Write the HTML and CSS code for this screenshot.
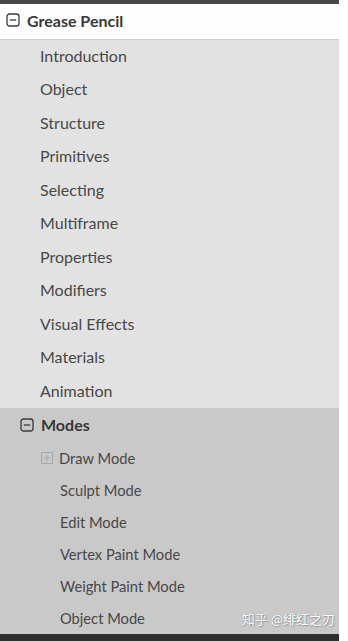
FILE: index.html
```html
<!doctype html>
<html lang="zh">
  <head>
    <meta charset="UTF-8" />
    <meta name="viewport" content="width=device-width, initial-scale=1.0" />
    <title>Grease Pencil</title>
    <link rel="stylesheet" href="styles.css">
  </head>
  <body>
    <div class="panel">
      <div class="top-bar"></div>
      <div class="header">
        <svg class="toggle" viewBox="0 0 14 14" width="14" height="14">
          <rect x="1" y="1" width="12" height="12" rx="2.5" fill="none" stroke="#3a3a3a" stroke-width="1.3"/>
          <line x1="3.8" y1="7" x2="10.2" y2="7" stroke="#3a3a3a" stroke-width="1.3"/>
        </svg>
        <span>Grease Pencil</span>
      </div>
      <ul class="list">
        <li>Introduction</li>
        <li>Object</li>
        <li>Structure</li>
        <li>Primitives</li>
        <li>Selecting</li>
        <li>Multiframe</li>
        <li>Properties</li>
        <li>Modifiers</li>
        <li>Visual Effects</li>
        <li>Materials</li>
        <li>Animation</li>
      </ul>
      <div class="modes">
        <div class="modes-title">
          <svg class="toggle" viewBox="0 0 14 14" width="14" height="14">
            <rect x="1" y="1" width="12" height="12" rx="2.5" fill="none" stroke="#3a3a3a" stroke-width="1.3"/>
            <line x1="3.8" y1="7" x2="10.2" y2="7" stroke="#3a3a3a" stroke-width="1.3"/>
          </svg>
          <span>Modes</span>
        </div>
        <ul class="sub-list">
          <li class="has-children">
            <svg class="expand" viewBox="0 0 12 12" width="12" height="12">
              <rect x="0.5" y="0.5" width="11" height="11" fill="none" stroke="#a9a9a9" stroke-width="1"/>
              <line x1="3" y1="6" x2="9" y2="6" stroke="#a9a9a9" stroke-width="1"/>
              <line x1="6" y1="3" x2="6" y2="9" stroke="#a9a9a9" stroke-width="1"/>
            </svg>
            Draw Mode
          </li>
          <li>Sculpt Mode</li>
          <li>Edit Mode</li>
          <li>Vertex Paint Mode</li>
          <li>Weight Paint Mode</li>
          <li>Object Mode<span class="watermark">知乎 @绯红之刃</span></li>
        </ul>
      </div>
      <div class="bottom-bar"></div>
    </div>
  </body>
</html>
```

FILE: styles.css
```css
* {
  margin: 0;
  padding: 0;
  box-sizing: border-box;
}
body {
  background-color: #ffffff;
  font-family: "Lato", "Noto Sans CJK SC", sans-serif;
  color: #484848;
}
.panel {
  width: 339px;
  height: 641px;
  display: flex;
  flex-direction: column;
}
.top-bar {
  height: 4px;
  background-color: #4b4749;
}
.header {
  height: 36px;
  display: flex;
  align-items: center;
  gap: 7px;
  padding-left: 6px;
  padding-bottom: 2px;
  background-color: #fdfdfd;
  border-bottom: 1px solid #cfcfcf;
  font-size: 16px;
  font-weight: bold;
  color: #383838;
}
.toggle {
  flex-shrink: 0;
}
.list {
  list-style: none;
  background-color: #e2e2e2;
}
.list li {
  height: 33.5px;
  display: flex;
  align-items: center;
  padding-left: 40px;
  padding-bottom: 2px;
  font-size: 16px;
}
.modes {
  flex: 1;
  background-color: #c9c9c9;
}
.modes-title {
  height: 34px;
  display: flex;
  align-items: center;
  gap: 7px;
  padding-left: 20px;
  padding-bottom: 1px;
  font-size: 16px;
  font-weight: bold;
  color: #383838;
}
.sub-list {
  list-style: none;
}
.sub-list li {
  height: 32px;
  display: flex;
  align-items: center;
  padding-left: 60px;
  padding-bottom: 1px;
  font-size: 14.7px;
  position: relative;
}
.sub-list li.has-children {
  padding-left: 41px;
  gap: 6px;
}
.watermark {
  position: absolute;
  right: 4px;
  top: 7px;
  font-size: 13px;
  color: #ffffff;
  text-shadow: 0 0 1px #8a8a8a, 1px 1px 1px #999999;
  font-family: "Noto Sans CJK SC", "Lato", sans-serif;
}
.bottom-bar {
  height: 7px;
  background-color: #2f2f2f;
}
```
